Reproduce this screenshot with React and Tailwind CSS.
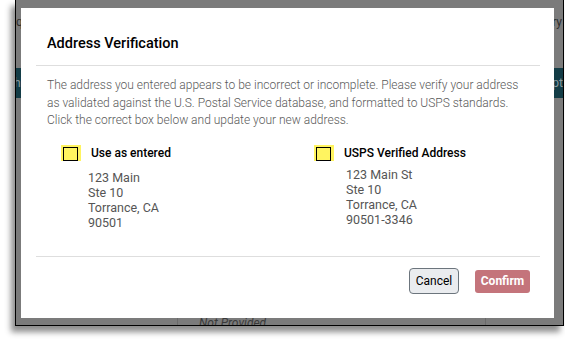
import React from 'react';

function Check({ label }) {
  return (
    <div className="flex items-center h-[18px]">
      <div className="w-[20px] h-[16px] bg-[#fff460] flex items-end pl-[2px]">
        <div className="w-[15px] h-[14px] border border-black" />
      </div>
      <span className="ml-[10px] text-[12px] font-medium text-black">{label}</span>
    </div>
  );
}

export default function App() {
  return (
    <div className="min-h-screen bg-white font-['Roboto',sans-serif]">
      <div className="pl-[15px]">
        <div className="relative w-[549px] h-[326px] bg-[#7b7b7b] border-l border-r border-b border-black shadow-[-4px_6px_6px_rgba(0,0,0,0.45)] overflow-hidden">
          {/* page behind the overlay */}
          <div className="flex justify-between pt-[13px] h-[68px] text-[12px] text-[#2e2e2e]">
            <span>q.</span>
            <span className="pr-[1px]">Ary</span>
          </div>
          <div className="h-[30px] bg-[#133c46] flex items-center justify-between text-[12px] text-[#8a9a9e]">
            <span className="-ml-[2px]">hb</span>
            <span>ipt</span>
          </div>
          <div className="h-[219px]" />
          <div className="flex h-[9px]">
            <div className="w-[161px]" />
            <div className="w-[309px] border-l border-r border-[#6a6a6a] pl-[21px] text-[12px] italic leading-[12px] text-[#3a3a3a]">
              Not Provided
            </div>
          </div>

          {/* modal */}
          <div className="absolute left-[5px] top-[8px] w-[533px] h-[310px] bg-white flex flex-col">
            <div className="pt-[26px] pb-[11px] pl-[26px]">
              <h2 className="text-[14.5px] leading-[20px] font-medium text-black">Address Verification</h2>
            </div>
            <div className="ml-[15px] mr-[14px] h-px bg-[#dedede]" />
            <div className="px-[26px] pt-[11px] h-[190px]">
              <p className="text-[12px] leading-[17.5px] font-light text-[#5a5a5a]">
                The address you entered appears to be incorrect or incomplete. Please verify your address as validated against the U.S. Postal Service database, and formatted to USPS standards. Click the correct box below and update your new address.
              </p>
              <div className="flex mt-[14px] pl-[14px]">
                <div className="w-[253px]">
                  <Check label="Use as entered" />
                  <div className="pl-[27px] mt-[8px] text-[12.5px] leading-[15.3px] text-[#555]">
                    <div>123 Main</div>
                    <div>Ste 10</div>
                    <div>Torrance, CA</div>
                    <div>90501</div>
                  </div>
                </div>
                <div>
                  <Check label="USPS Verified Address" />
                  <div className="pl-[32px] mt-[5px] text-[12.5px] leading-[15.3px] text-[#555]">
                    <div>123 Main St</div>
                    <div>Ste 10</div>
                    <div>Torrance, CA</div>
                    <div>90501-3346</div>
                  </div>
                </div>
              </div>
            </div>
            <div className="ml-[15px] mr-[14px] h-px bg-[#dedede]" />
            <div className="flex justify-end items-center gap-[16px] pr-[24px] pt-[11px]">
              <button className="w-[50px] h-[26px] rounded-[4px] border border-[#6c757d] bg-[#eaecef] text-[12px] font-normal text-black">
                Cancel
              </button>
              <button className="w-[55px] h-[23px] rounded-[3px] bg-[#c4747b] text-[12px] font-bold text-white">
                Confirm
              </button>
            </div>
          </div>
        </div>
      </div>
    </div>
  );
}
